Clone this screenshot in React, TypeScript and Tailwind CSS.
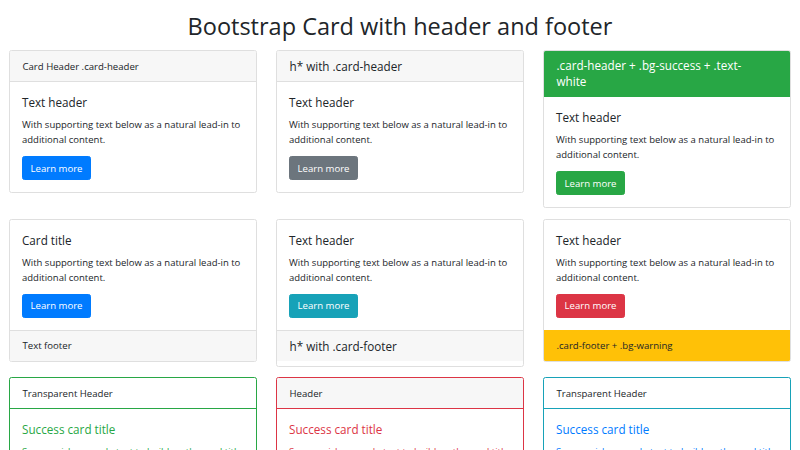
import React from "react";

const btnColors: Record<string, string> = {
  primary: "bg-[#007bff] border-[#007bff]",
  secondary: "bg-[#6c757d] border-[#6c757d]",
  success: "bg-[#28a745] border-[#28a745]",
  info: "bg-[#17a2b8] border-[#17a2b8]",
  danger: "bg-[#dc3545] border-[#dc3545]",
};

function Button({ variant }: { variant: string }) {
  return (
    <span
      className={`block w-fit rounded-[2.5px] border px-[7.5px] py-[3.5px] text-[9.6px] leading-[15px] text-white ${btnColors[variant]}`}
    >
      Learn more
    </span>
  );
}

function Body({ title, variant }: { title: string; variant: string }) {
  return (
    <div className="p-[12px]">
      <h5 className="mb-[7px] text-[11.7px] leading-[16px] font-normal">{title}</h5>
      <p className="mb-[9px] text-[9.5px] leading-[15px]">
        With supporting text below as a natural lead-in to additional content.
      </p>
      <Button variant={variant} />
    </div>
  );
}

const cardBase = "overflow-hidden rounded-[2.5px] border border-[#dfdfdf] bg-white";

export default function App() {
  return (
    <div className="min-h-screen bg-white font-['Open_Sans',sans-serif] text-[#212529]">
      <h1 className="pt-[9px] pb-[7px] text-center text-[23.5px] leading-[34px] font-normal">
        Bootstrap Card with header and footer
      </h1>
      <div className="grid grid-cols-[248px_248px_248px] items-start gap-x-[19px] gap-y-[10.5px] px-[9px]">
        {/* row 1 */}
        <div className={cardBase}>
          <div className="border-b border-[#dfdfdf] bg-[#f7f7f7] px-[12.5px] py-[7.5px] text-[9.6px] leading-[15px]">
            Card Header .card-header
          </div>
          <Body title="Text header" variant="primary" />
        </div>
        <div className={cardBase}>
          <h5 className="border-b border-[#dfdfdf] bg-[#f7f7f7] px-[12.5px] py-[7px] text-[11.7px] leading-[16px] font-normal">
            h* with .card-header
          </h5>
          <Body title="Text header" variant="secondary" />
        </div>
        <div className={cardBase}>
          <h5 className="border-b border-[#28a745] bg-[#28a745] py-[7px] pr-[22px] pl-[12.5px] text-[11.7px] leading-[15.5px] font-normal text-white">
            .card-header + .bg-success + .text-white
          </h5>
          <Body title="Text header" variant="success" />
        </div>

        {/* row 2 */}
        <div className={cardBase}>
          <Body title="Card title" variant="primary" />
          <div className="border-t border-[#dfdfdf] bg-[#f7f7f7] px-[12.5px] py-[7.5px] text-[9.6px] leading-[15px]">
            Text footer
          </div>
        </div>
        <div className={cardBase}>
          <Body title="Text header" variant="info" />
          <h5 className="mb-[5px] border-t border-[#dfdfdf] bg-[#f7f7f7] px-[12.5px] py-[7px] text-[11.7px] leading-[16px] font-normal">
            h* with .card-footer
          </h5>
        </div>
        <div className={cardBase}>
          <Body title="Text header" variant="danger" />
          <div className="border-t border-[#ffc107] bg-[#ffc107] px-[12.5px] py-[7.5px] text-[9.6px] leading-[15px]">
            .card-footer + .bg-warning
          </div>
        </div>

        {/* row 3 */}
        <div className="overflow-hidden rounded-[2.5px] border border-[#28a745] bg-white">
          <div className="border-b border-[#28a745] px-[12.5px] py-[7.5px] text-[9.6px] leading-[15px]">
            Transparent Header
          </div>
          <div className="p-[12px] text-[#28a745]">
            <h5 className="mb-[7px] text-[11.7px] leading-[16px] font-normal">Success card title</h5>
            <p className="text-[9.5px] leading-[15px]">
              Some quick example text to build on the card title and make up the bulk of the card's content.
            </p>
          </div>
        </div>
        <div className="overflow-hidden rounded-[2.5px] border border-[#dc3545] bg-white">
          <div className="border-b border-[#dc3545] bg-[#f7f7f7] px-[12.5px] py-[7.5px] text-[9.6px] leading-[15px]">
            Header
          </div>
          <div className="p-[12px] text-[#dc3545]">
            <h5 className="mb-[7px] text-[11.7px] leading-[16px] font-normal">Success card title</h5>
            <p className="text-[9.5px] leading-[15px]">
              Some quick example text to build on the card title and make up the bulk of the card's content.
            </p>
          </div>
        </div>
        <div className="overflow-hidden rounded-[2.5px] border border-[#17a2b8] bg-white">
          <div className="border-b border-[#17a2b8] px-[12.5px] py-[7.5px] text-[9.6px] leading-[15px]">
            Transparent Header
          </div>
          <div className="p-[12px] text-[#007bff]">
            <h5 className="mb-[7px] text-[11.7px] leading-[16px] font-normal">Success card title</h5>
            <p className="text-[9.5px] leading-[15px]">
              Some quick example text to build on the card title and make up the bulk of the card's content.
            </p>
          </div>
        </div>
      </div>
    </div>
  );
}
